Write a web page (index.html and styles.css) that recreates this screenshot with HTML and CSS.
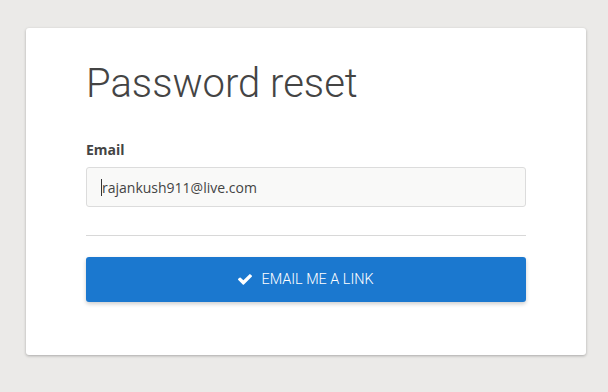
FILE: index.html
```html
<!DOCTYPE html>
<html>
<head>
<meta charset="utf-8">
<link rel="stylesheet" href="styles.css">
</head>
<body>
<div class="page">
  <div class="card">
    <h1 class="title">Password reset</h1>
    <label class="label" for="email">Email</label>
    <div class="input"><span class="caret"></span>rajankush911@live.com</div>
    <hr class="divider">
    <button class="btn">
      <svg class="check" viewBox="120 330 1552 1200" width="14" height="11"><path fill="#fff" d="M1671 566q0 40-28 68l-724 724-136 136q-28 28-68 28t-68-28l-136-136-362-362q-28-28-28-68t28-68l136-136q28-28 68-28t68 28l294 295 656-657q28-28 68-28t68 28l136 136q28 28 28 68z"/></svg>
      <span>EMAIL ME A LINK</span>
    </button>
  </div>
</div>
</body>
</html>
```
FILE: styles.css
```css
html, body { margin: 0; padding: 0; }
body { background: #ebeae8; width: 608px; height: 392px; overflow: hidden; }
.page { padding: 28px 22px 0 26px; }
.card {
  width: 560px; height: 327px; box-sizing: border-box;
  background: #fff; border-radius: 3px;
  box-shadow: 0 1px 3px rgba(0,0,0,0.28);
  padding: 32px 60px 0 60px;
}
.title {
  margin: 0; font-family: Roboto, sans-serif; font-weight: 300;
  font-size: 40px; line-height: 48px; color: #444;
}
.label {
  display: block; margin-top: 33px;
  font-family: "Open Sans", sans-serif; font-weight: 700; font-size: 14px;
  line-height: 18px; color: #444;
}
.input {
  margin-top: 8px; height: 40px; box-sizing: border-box;
  border: 1px solid #dcdcdc; border-radius: 3px; background: #f9f9f8;
  font-family: "Open Sans", sans-serif; font-size: 14px; color: #444;
  display: flex; align-items: center; padding-left: 14px;
}
.caret { display: inline-block; width: 1px; height: 17px; background: #333; }
.divider { margin: 28px 0 0 0; border: 0; border-top: 1px solid #d8d8d8; height: 0; }
.btn {
  margin-top: 21px; width: 440px; height: 45px; border: 0; border-radius: 3px;
  background: #1b78cf; color: #fff; box-shadow: 0 2px 4px rgba(0,0,0,0.2);
  font-family: Roboto, sans-serif; font-size: 14.4px; font-weight: 300;
  display: flex; align-items: center; justify-content: center; gap: 9px; padding: 0;
}
.check { display: block; }
```
